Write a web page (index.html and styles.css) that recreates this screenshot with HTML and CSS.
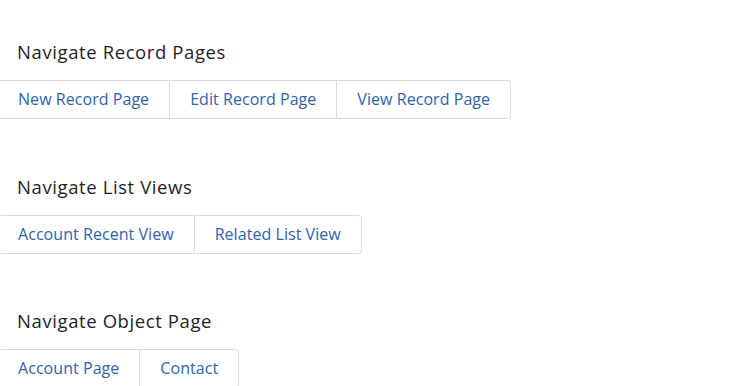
FILE: index.html
```html
<!DOCTYPE html>
<html>
<head>
    <title>Navigation Demo</title>
    <link rel="stylesheet" href="styles.css">
</head>
<body>
    <div class="page">
        <div class="section">
            <h2 class="section-title">Navigate Record Pages</h2>
            <div class="button-group">
                <button class="btn">New Record Page</button>
                <button class="btn">Edit Record Page</button>
                <button class="btn">View Record Page</button>
            </div>
        </div>
        <div class="section">
            <h2 class="section-title">Navigate List Views</h2>
            <div class="button-group">
                <button class="btn">Account Recent View</button>
                <button class="btn">Related List View</button>
            </div>
        </div>
        <div class="section">
            <h2 class="section-title">Navigate Object Page</h2>
            <div class="button-group">
                <button class="btn">Account Page</button>
                <button class="btn">Contact</button>
            </div>
        </div>
    </div>
</body>
</html>
```
FILE: styles.css
```css
body {
    margin: 0;
    background: #ffffff;
    font-family: "Open Sans", sans-serif;
    color: #181818;
}
.page {
    padding: 38px 0 0 17px;
}
.section {
    margin-bottom: 53.5px;
}
.section-title {
    margin: 0 0 14px 0;
    font-size: 18.5px;
    letter-spacing: 0.6px;
    font-weight: 400;
    line-height: 28px;
    color: #1f1f1f;
}
.button-group {
    display: inline-flex;
    margin-left: -20px;
}
.btn {
    font-family: inherit;
    font-size: 16px;
    letter-spacing: 0.05px;
    line-height: 37px;
    padding: 0 20px;
    background: #ffffff;
    color: #2f63ad;
    border: 1px solid #dddbda;
    border-left: none;
    cursor: pointer;
}
.btn:first-child {
    border-left: 1px solid #dddbda;
    border-radius: 4px 0 0 4px;
}
.btn:last-child {
    border-radius: 0 4px 4px 0;
}
```
